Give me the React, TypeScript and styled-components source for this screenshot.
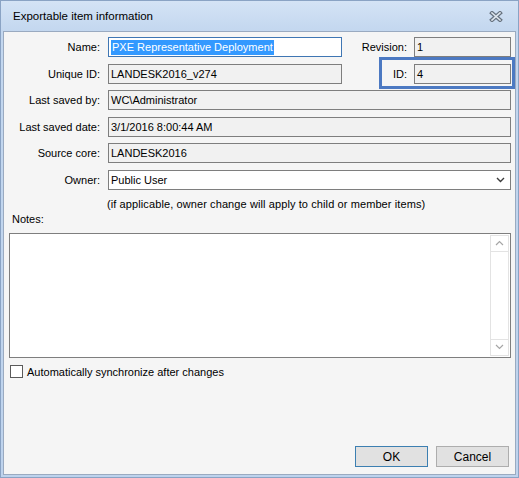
import styled, { createGlobalStyle } from "styled-components";

const GlobalStyle = createGlobalStyle`
  html, body {
    margin: 0;
    padding: 0;
    background: #ffffff;
  }
  body {
    font-family: "Liberation Sans", Arial, sans-serif;
    font-size: 11px;
    color: #000;
  }
`;

const Window = styled.div`
  width: 519px;
  height: 478px;
  box-sizing: border-box;
  border: 1px solid #8aa3c4;
  background: linear-gradient(#d4e3f5, #c3d7ef 30px, #bed3ed);
  padding: 0 2px 2px 2px;
  display: flex;
  flex-direction: column;
`;

const TitleBar = styled.div`
  height: 30px;
  display: flex;
  align-items: center;
  justify-content: space-between;
  padding: 0 13px 0 10px;
  font-size: 11.5px;
  color: #000;
`;

const Client = styled.div`
  flex: 1;
  border: 1px solid #9aaac0;
  background: #f5f5f5;
  padding: 5px 4px 7px 0;
  display: flex;
  flex-direction: column;
`;

const Fields = styled.div`
  display: flex;
  flex-direction: column;
  gap: 6.6px;
`;

const Row = styled.div`
  position: relative;
  display: flex;
  align-items: center;
  height: 20px;
`;

const Label = styled.div<{ $width?: number; $gap?: number }>`
  width: ${(p) => (p.$width ? `${p.$width}px` : "auto")};
  flex: ${(p) => (p.$width ? "none" : "1")};
  margin-right: ${(p) => p.$gap ?? 8}px;
  text-align: right;
  white-space: nowrap;
`;

const Field = styled.div<{ $width?: number; $white?: boolean; $focus?: boolean }>`
  box-sizing: border-box;
  height: 20px;
  width: ${(p) => (p.$width ? `${p.$width}px` : "auto")};
  flex: ${(p) => (p.$width ? "none" : "1")};
  border: 1px solid ${(p) => (p.$focus ? "#3f76b3" : "#7e7e7e")};
  background: ${(p) => (p.$white ? "#ffffff" : "#f1f1f1")};
  padding: 0 2px;
  line-height: 18px;
  white-space: nowrap;
  overflow: hidden;
  display: flex;
  align-items: center;
`;

const Selected = styled.span`
  background: #3399ff;
  color: #ffffff;
  padding: 0 1px;
  line-height: 15px;
`;

const Chevron = styled.svg`
  margin-left: auto;
  margin-right: 3px;
`;

const Highlight = styled.div`
  position: absolute;
  right: -4px;
  top: -7px;
  width: 136px;
  height: 32px;
  box-sizing: border-box;
  border: 3px solid #4c79c2;
  pointer-events: none;
`;

const Hint = styled.div`
  margin: 7px 0 0 103px;
  line-height: 14px;
  letter-spacing: 0.1px;
`;

const NotesLabel = styled.div`
  margin: 1px 0 0 8px;
  line-height: 14px;
`;

const NotesBox = styled.div`
  margin: 7px 0 0 5px;
  height: 125px;
  box-sizing: border-box;
  border: 1px solid #7e7e7e;
  background: #ffffff;
  display: flex;
  justify-content: flex-end;
  padding: 1px;
`;

const ScrollBar = styled.div`
  width: 17px;
  border-left: 1px solid #e3e3e3;
  border-right: 1px solid #e3e3e3;
  display: flex;
  flex-direction: column;
  justify-content: space-between;
  background: #ffffff;
`;

const ScrollButton = styled.div`
  height: 17px;
  box-sizing: border-box;
  border-top: 1px solid #e3e3e3;
  border-bottom: 1px solid #e3e3e3;
  display: flex;
  align-items: center;
  justify-content: center;
`;

const CheckRow = styled.label`
  margin: 7px 0 0 6px;
  height: 14px;
  display: flex;
  align-items: center;
  gap: 4px;
`;

const CheckBox = styled.span`
  width: 13px;
  height: 13px;
  box-sizing: border-box;
  border: 1px solid #5a5a5a;
  background: #ffffff;
`;

const Buttons = styled.div`
  margin-top: auto;
  display: flex;
  justify-content: flex-end;
  gap: 8px;
  padding-right: 2px;
`;

const Button = styled.button<{ $default?: boolean }>`
  width: 73px;
  height: 21px;
  box-sizing: border-box;
  border: 1px solid ${(p) => (p.$default ? "#3c7fb1" : "#adadad")};
  background: #e1e1e1;
  font-family: "Liberation Sans", Arial, sans-serif;
  font-size: 12px;
  color: #000;
  padding: 0;
`;

const CloseIcon = () => (
  <svg width="14" height="11" viewBox="0 0 14 11">
    <path d="M3 2 L11 9 M11 2 L3 9" stroke="#66727f" strokeWidth="4" strokeLinecap="square" />
    <path d="M3 2 L11 9 M11 2 L3 9" stroke="#dfe6ee" strokeWidth="1.6" strokeLinecap="square" />
  </svg>
);

const App = () => {
  return (
    <>
      <GlobalStyle />
      <Window>
        <TitleBar>
          <span>Exportable item information</span>
          <CloseIcon />
        </TitleBar>
        <Client>
          <Fields>
            <Row>
              <Label $width={96}>Name:</Label>
              <Field $width={234} $white $focus>
                <Selected>PXE Representative Deployment</Selected>
              </Field>
              <Label $gap={7}>Revision:</Label>
              <Field $width={97}>1</Field>
            </Row>
            <Row>
              <Label $width={96}>Unique ID:</Label>
              <Field $width={234}>LANDESK2016_v274</Field>
              <Label $gap={7}>ID:</Label>
              <Field $width={97}>4</Field>
              <Highlight />
            </Row>
            <Row>
              <Label $width={96}>Last saved by:</Label>
              <Field>WC\Administrator</Field>
            </Row>
            <Row>
              <Label $width={96}>Last saved date:</Label>
              <Field>3/1/2016 8:00:44 AM</Field>
            </Row>
            <Row>
              <Label $width={96}>Source core:</Label>
              <Field>LANDESK2016</Field>
            </Row>
            <Row>
              <Label $width={96}>Owner:</Label>
              <Field $white>
                Public User
                <Chevron width="9" height="6" viewBox="0 0 9 6">
                  <path d="M1 1 L4.5 4.5 L8 1" fill="none" stroke="#3c3c3c" strokeWidth="1.4" />
                </Chevron>
              </Field>
            </Row>
          </Fields>
          <Hint>(if applicable, owner change will apply to child or member items)</Hint>
          <NotesLabel>Notes:</NotesLabel>
          <NotesBox>
            <ScrollBar>
              <ScrollButton>
                <svg width="9" height="6" viewBox="0 0 9 6">
                  <path d="M1 5 L4.5 1.5 L8 5" fill="none" stroke="#a6a6a6" strokeWidth="1.2" />
                </svg>
              </ScrollButton>
              <ScrollButton>
                <svg width="9" height="6" viewBox="0 0 9 6">
                  <path d="M1 1 L4.5 4.5 L8 1" fill="none" stroke="#a6a6a6" strokeWidth="1.2" />
                </svg>
              </ScrollButton>
            </ScrollBar>
          </NotesBox>
          <CheckRow>
            <CheckBox />
            Automatically synchronize after changes
          </CheckRow>
          <Buttons>
            <Button $default>OK</Button>
            <Button>Cancel</Button>
          </Buttons>
        </Client>
      </Window>
    </>
  );
};

export default App;
